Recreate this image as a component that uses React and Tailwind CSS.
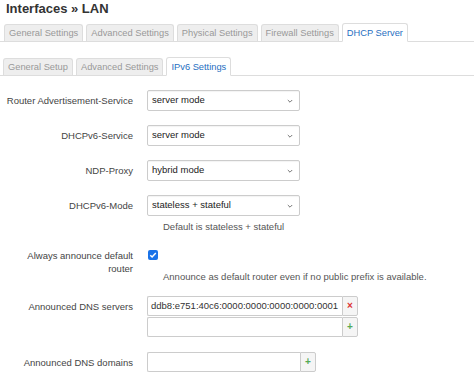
import React from 'react'

const topTabs = ['General Settings', 'Advanced Settings', 'Physical Settings', 'Firewall Settings', 'DHCP Server']
const subTabs = ['General Setup', 'Advanced Settings', 'IPv6 Settings']

const Tabs = ({ items, active, className }) => (
  <ul className={`flex items-end gap-[3px] border-b border-[#ddd] text-[9.3px] ${className}`}>
    {items.map((el) => (
      <li
        key={el}
        className={
          el === active
            ? 'whitespace-nowrap px-[4px] h-[19px] leading-[18px] -mb-px bg-white border border-[#ddd] border-b-white text-[#1f6fbf] rounded-t-[3px]'
            : 'whitespace-nowrap px-[4px] h-[17px] leading-[17px] bg-[#eee] border border-[#ddd] border-b-0 text-[#999] rounded-t-[3px]'
        }
      >
        {el}
      </li>
    ))}
  </ul>
)

const Chevron = () => (
  <svg width="8" height="8" viewBox="0 0 8 8" className="text-[#666]">
    <path d="M1.8 3l2.2 2.2L6.2 3" fill="none" stroke="currentColor" strokeWidth="0.9" />
  </svg>
)

const Select = ({ value }) => (
  <div className="w-[153px] h-[21px] flex items-center justify-between pl-[4px] pr-[5px] border border-[#ccc] rounded-[2px] bg-white text-[#222] shadow-[inset_0_1px_1px_rgba(0,0,0,0.05)]">
    <span>{value}</span>
    <Chevron />
  </div>
)

const Row = ({ label, children, className = '', labelStyle = '' }) => (
  <div className={`flex ${className}`}>
    <div className={`w-[133px] shrink-0 text-right text-[#444] leading-[13px] whitespace-nowrap ${labelStyle}`}>{label}</div>
    <div className="ml-[14px]">{children}</div>
  </div>
)

const InputBtn = ({ value, width, kind }) => (
  <div className="flex h-[20px]">
    <div
      className="border border-[#ccc] border-r-0 rounded-l-[2px] bg-white text-[#333] pl-[3px] leading-[18px] overflow-hidden whitespace-nowrap"
      style={{ width }}
    >
      {value}
    </div>
    <div className="w-[16px] border border-[#ccc] rounded-r-[2px] bg-[#f5f5f5] flex items-center justify-center text-[10px] font-bold leading-none">
      {kind === 'x' ? <span className="text-[#d33]">×</span> : <span className="text-[#5a5]">+</span>}
    </div>
  </div>
)

const App = () => {
  return (
    <div className="w-[474px] h-[392px] bg-white overflow-hidden text-[9.5px] font-['Liberation_Sans',Arial,sans-serif]">
      <h2 className="pl-[6px] pt-[1px] text-[13px] font-bold text-[#333] leading-[15px]">Interfaces » LAN</h2>
      <Tabs items={topTabs} active="DHCP Server" className="mt-[7px] pl-[4px]" />
      <Tabs items={subTabs} active="IPv6 Settings" className="mt-[15px] pl-[3px]" />

      <div className="mt-[14px] flex flex-col">
        <Row label="Router Advertisement-Service" className="items-center">
          <Select value="server mode" />
        </Row>
        <Row label="DHCPv6-Service" className="items-center mt-[14px]">
          <Select value="server mode" />
        </Row>
        <Row label="NDP-Proxy" className="items-center mt-[14px]">
          <Select value="hybrid mode" />
        </Row>
        <Row label="DHCPv6-Mode" className="items-center mt-[14px]">
          <Select value="stateless + stateful" />
        </Row>
        <div className="pl-[163px] mt-[4px] text-[#555] leading-[13px]">Default is stateless + stateful</div>

        <Row label={<>Always announce default<br />router</>} className="mt-[16px]">
          <div className="pt-[1px]">
            <div className="ml-[1px] w-[10px] h-[10px] rounded-[2px] bg-[#1a73e8] flex items-center justify-center">
              <svg width="8" height="8" viewBox="0 0 8 8">
                <path d="M1.3 4.2l1.8 1.8L6.8 2" fill="none" stroke="white" strokeWidth="1.5" />
              </svg>
            </div>
            <div className="mt-[10px] ml-[16px] text-[#555] whitespace-nowrap leading-[13px]">
              Announce as default router even if no public prefix is available.
            </div>
          </div>
        </Row>

        <Row label="Announced DNS servers" className="mt-[13px] items-start" labelStyle="pt-[4px]">
          <div className="flex flex-col gap-[1px]">
            <InputBtn value="ddb8:e751:40c6:0000:0000:0000:0000:0001" width={195} kind="x" />
            <InputBtn value="" width={195} kind="+" />
          </div>
        </Row>

        <Row label="Announced DNS domains" className="mt-[15px] items-center">
          <InputBtn value="" width={153} kind="+" />
        </Row>
      </div>
    </div>
  )
}

export default App
